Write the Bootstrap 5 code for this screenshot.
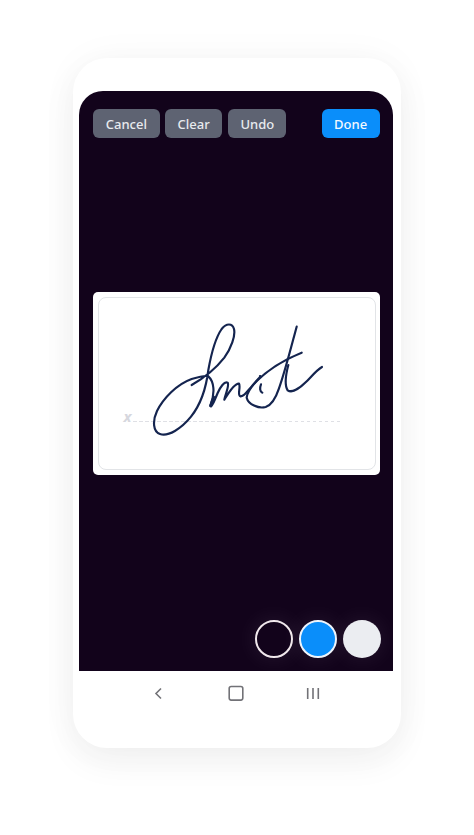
<!DOCTYPE html>
<html lang="en">
<head>
<meta charset="utf-8">
<title>Signature</title>
<link rel="stylesheet" href="https://cdn.jsdelivr.net/npm/bootstrap@5.3.0/dist/css/bootstrap.min.css">
<style>
html, body { background: #fff; height: 100%; overflow: hidden; }
body { font-family: "Noto Sans", "Open Sans", sans-serif; padding: 58px 0 0 73px; }
.phone-shell { width: 327.5px; height: 690px; background: #fff; border-radius: 34px; padding: 33px 8px 0 6px; box-shadow: 0 14px 34px rgba(30,30,40,.055), 0 0 40px rgba(30,30,40,.035); }
.phone-screen { height: 580px; background: #12031b; border-radius: 24px 24px 0 0; padding: 18px 13px 13.5px 14px; }
.tool-btn { height: 29px; padding: 1px 0 0; font-size: 13px; font-weight: 500; line-height: 28px; border: 0; border-radius: 6px; color: #e8eaee; background: #5e6372; }
.tool-btn:hover { color: #e8eaee; background: #5e6372; }
.w-cancel { width: 67px; margin-right: 5px; }
.w-clear { width: 58px; margin-right: 6px; }
.w-undo { width: 58px; margin-right: 35.5px; }
.tool-done, .tool-done:hover { width: 58px; background: #0a8efa; color: #f4f9ff; }
.sig-card { height: 183px; margin-top: 154px; padding: 5px 4px 5px 5px; background: #fff; border-radius: 5px; }
.sig-pad { height: 100%; padding: 111px 0 0 24.5px; border: 1.5px solid #e2e4e7; border-radius: 8px; }
.sig-mark { width: 9px; font-size: 15px; font-weight: 700; font-style: italic; line-height: 14px; color: #d6d7de; }
.sig-rule { width: 207px; height: 1.5px; margin-top: 11.5px; background: repeating-linear-gradient(90deg, #dfe0e5 0 3.5px, transparent 3.5px 6px); }
.sig-ink { position: absolute; left: 45.5px; top: 16.5px; width: 190px; height: 130px; }
.swatch-row { gap: 6px; margin: 145px -1px 0 0; }
.swatch { width: 38px; height: 38px; border-radius: 50%; box-shadow: 0 0 24px rgba(255,255,255,.09); }
.swatch-dark { background: #12031b; border: 2px solid #f0e8ec; }
.swatch-blue { background: #0a8efa; border: 2px solid #eef4fb; }
.swatch-light { background: #ebedf1; }
.nav-strip { gap: 57.5px; padding-top: 12px; }
.nav-glyph { width: 20px; height: 20px; }
</style>
</head>
<body>
<div class="phone-shell">
  <div class="phone-screen d-flex flex-column">
    <div class="d-flex tool-row">
      <button type="button" class="btn tool-btn w-cancel">Cancel</button>
      <button type="button" class="btn tool-btn w-clear">Clear</button>
      <button type="button" class="btn tool-btn w-undo">Undo</button>
      <button type="button" class="btn tool-btn tool-done">Done</button>
    </div>
    <div class="sig-card">
      <div class="sig-pad position-relative d-flex">
        <span class="sig-mark">x</span>
        <div class="sig-rule"></div>
        <svg class="sig-ink" viewBox="0 0 570 390" fill="none" stroke="#14244f" stroke-width="6.5" stroke-linecap="round" stroke-linejoin="round">
          <path d="M140 210 C165 196 205 170 238 128 C258 100 272 62 267 42 C262 24 244 24 230 42 C212 68 198 120 190 165 C184 215 172 262 138 305 C108 342 70 365 45 357 C24 350 22 318 36 288 C55 250 95 208 140 192 C160 186 180 180 190 184 C206 198 212 232 196 272 C198 282 208 258 218 234 C226 216 238 198 248 203 C254 212 240 240 238 254 C248 238 268 204 282 206 C288 216 276 240 286 244 C298 246 310 224 322 212 C345 186 390 145 470 113"/>
          <path d="M345 186 C326 206 306 232 305 248 C310 268 340 282 362 276 C380 270 394 244 402 220 C420 170 440 90 455 35"/>
          <path d="M430 150 C422 180 418 210 428 226 C440 234 462 222 482 202 C500 184 515 165 531 156"/>
          <path d="M345 183 L346 183"/>
          <path d="M348 208 C344 218 344 230 352 233"/>
          <path d="M197 272 L206 246" stroke-width="8.5"/>
        </svg>
      </div>
    </div>
    <div class="d-flex justify-content-end swatch-row">
      <div class="swatch swatch-dark"></div>
      <div class="swatch swatch-blue"></div>
      <div class="swatch swatch-light"></div>
    </div>
  </div>
  <div class="d-flex justify-content-center nav-strip">
    <svg class="nav-glyph" viewBox="0 0 20 20" fill="none" stroke="#727277" stroke-width="1.6"><path d="M13 5.5 L8 10.5 L13 15.5"/></svg>
    <svg class="nav-glyph" viewBox="0 0 20 20" fill="none" stroke="#727277" stroke-width="1.6"><rect x="3.2" y="3.5" width="13.6" height="13.6" rx="2"/></svg>
    <svg class="nav-glyph" viewBox="0 0 20 20" fill="none" stroke="#727277" stroke-width="1.6"><path d="M4.7 5V16M10 5V16M15.3 5V16"/></svg>
  </div>
</div>
<script src="https://cdn.jsdelivr.net/npm/bootstrap@5.3.0/dist/js/bootstrap.bundle.min.js"></script>
</body>
</html>
